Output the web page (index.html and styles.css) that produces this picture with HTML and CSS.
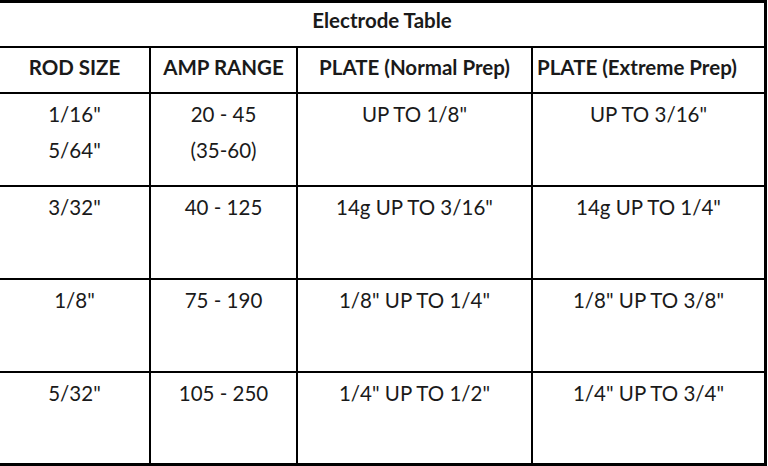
FILE: index.html
```html
<!DOCTYPE html>
<html>
<head>
<meta charset="utf-8">
<title>Electrode Table</title>
<link rel="stylesheet" href="styles.css">
</head>
<body>
<div class="table">
  <div class="cell title">Electrode Table</div>

  <div class="cell head">ROD SIZE</div>
  <div class="cell head">AMP RANGE</div>
  <div class="cell head">PLATE (Normal Prep)</div>
  <div class="cell head left">PLATE (Extreme Prep)</div>

  <div class="cell">1/16"<br>5/64"</div>
  <div class="cell">20 - 45<br>(35-60)</div>
  <div class="cell">UP TO 1/8"</div>
  <div class="cell">UP TO 3/16"</div>

  <div class="cell">3/32"</div>
  <div class="cell">40 - 125</div>
  <div class="cell">14g UP TO 3/16"</div>
  <div class="cell">14g UP TO 1/4"</div>

  <div class="cell">1/8"</div>
  <div class="cell">75 - 190</div>
  <div class="cell">1/8" UP TO 1/4"</div>
  <div class="cell">1/8" UP TO 3/8"</div>

  <div class="cell">5/32"</div>
  <div class="cell">105 - 250</div>
  <div class="cell">1/4" UP TO 1/2"</div>
  <div class="cell">1/4" UP TO 3/4"</div>
</div>
</body>
</html>
```
FILE: styles.css
```css
html, body {
  margin: 0;
  padding: 0;
  background: #fff;
}

.table {
  width: 767px;
  height: 466px;
  box-sizing: border-box;
  padding: 3px 3px 3px 0;
  background: #000;
  display: grid;
  grid-template-columns: 149px 145px 233px 231px;
  grid-template-rows: 43px 44px 91px 91px 91px 90px;
  gap: 2px;
  font-family: Lato, "Open Sans", sans-serif;
  font-size: 20.5px;
  line-height: 36px;
  color: #1a1a1a;
}

.cell {
  background: #fff;
  text-align: center;
  padding-top: 2px;
  white-space: nowrap;
  overflow: hidden;
}

.title {
  grid-column: 1 / -1;
  font-weight: bold;
  padding-top: 0;
  line-height: 34px;
}

.head {
  font-weight: bold;
  padding-top: 1px;
}

.left {
  text-align: left;
  padding-left: 4px;
}
```
